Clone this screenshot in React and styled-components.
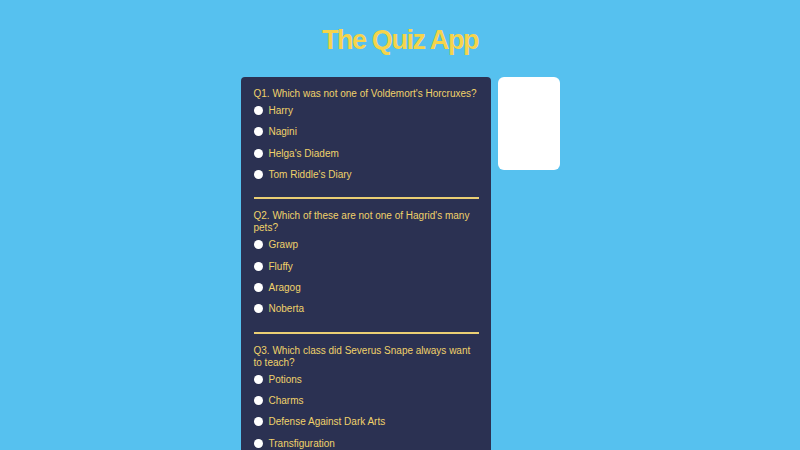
import React from 'react';
import styled, { createGlobalStyle } from 'styled-components';

const GlobalStyle = createGlobalStyle`
    html, body {
        margin: 0;
        padding: 0;
        background: #56c1ef;
    }
    body {
        font-family: "Liberation Sans", Arial, sans-serif;
    }
`;

// data
const questions = [
    {
        id: 1,
        text: "Q1. Which was not one of Voldemort's Horcruxes?",
        options: ['Harry', 'Nagini', "Helga's Diadem", "Tom Riddle's Diary"],
    },
    {
        id: 2,
        text: "Q2. Which of these are not one of Hagrid's many pets?",
        options: ['Grawp', 'Fluffy', 'Aragog', 'Noberta'],
    },
    {
        id: 3,
        text: 'Q3. Which class did Severus Snape always want to teach?',
        options: ['Potions', 'Charms', 'Defense Against Dark Arts', 'Transfiguration'],
    },
];

function App() {
    return (
        <>
            <GlobalStyle />
            <Page>
                <Title>The Quiz App</Title>
                <Layout>
                    <Panel>
                        {questions.map((q, i) => (
                            <Question key={q.id} last={i === questions.length - 1}>
                                <QText>{q.text}</QText>
                                {q.options.map((opt) => (
                                    <Option key={opt}>
                                        <Radio type="radio" name={`q${q.id}`} />
                                        <span>{opt}</span>
                                    </Option>
                                ))}
                            </Question>
                        ))}
                    </Panel>
                    <Score />
                </Layout>
            </Page>
        </>
    );
}

const Page = styled.div`
    height: 450px;
    overflow: hidden;
    padding-top: 23px;
    box-sizing: border-box;
`;
const Title = styled.h1`
    margin: 0 0 20px;
    text-align: center;
    font-family: "Liberation Sans", Arial, sans-serif;
    font-weight: 700;
    font-size: 27px;
    line-height: 34px;
    color: #f6d44b;
    letter-spacing: -1.4px;
`;
const Layout = styled.div`
    display: flex;
    justify-content: center;
    align-items: flex-start;
    gap: 7px;
`;
const Panel = styled.div`
    width: 250px;
    box-sizing: border-box;
    padding: 11px 12px 0 13px;
    background: #2b3152;
    border-radius: 4px;
`;
const Question = styled.div`
    padding-bottom: ${(p) => (p.last ? '0' : '12px')};
    margin-bottom: ${(p) => (p.last ? '0' : '11px')};
    border-bottom: ${(p) => (p.last ? 'none' : '2px solid #eacf74')};
`;
const QText = styled.div`
    font-size: 10px;
    line-height: 12px;
    color: #f0d26a;
`;
const Option = styled.label`
    display: flex;
    align-items: center;
    height: 21.33px;
    font-size: 10px;
    color: #f0d26a;
    span {
        margin-left: 6px;
    }
`;
const Radio = styled.input`
    appearance: none;
    margin: 0;
    width: 9px;
    height: 9px;
    border-radius: 50%;
    background: #ffffff;
    border: none;
`;
const Score = styled.div`
    width: 62px;
    height: 93px;
    background: #ffffff;
    border-radius: 6px;
`;

export default App;
